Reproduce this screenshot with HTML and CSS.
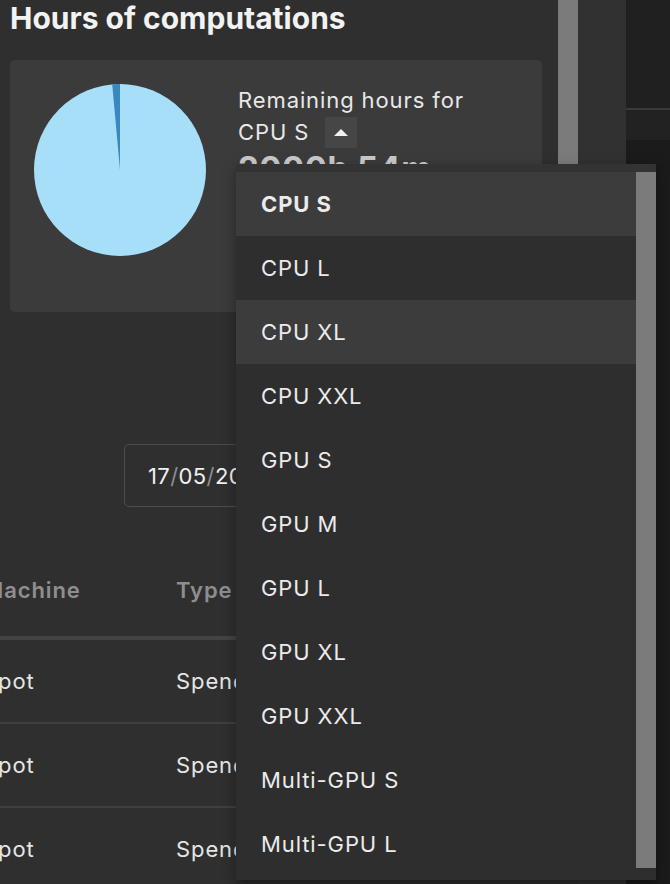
FILE: index.html
```html
<!DOCTYPE html>
<html lang="en">
<head>
<meta charset="utf-8">
<title>Hours of computations</title>
<link rel="stylesheet" href="styles.css">
</head>
<body>
<div class="app">
  <main class="main">
    <h1 class="title">Hours of computations</h1>
    <section class="card">
      <svg class="pie" width="172" height="172" viewBox="0 0 172 172" aria-hidden="true">
        <circle cx="86" cy="86" r="86" fill="#a8dff8"/>
        <path d="M86 86 L86 0 A86 86 0 0 0 78.2 0.35 Z" fill="#3a88c0"/>
      </svg>
      <div class="info">
        <div class="info-line">Remaining hours for</div>
        <div class="info-select">
          <span>CPU S</span>
          <span class="arrow-btn"><span class="tri"></span></span>
        </div>
        <div class="big">2000h 54m</div>
      </div>
    </section>
    <div class="date-wrap">
      <div class="date-input">17<span class="sep">/</span>05<span class="sep">/</span>2023</div>
    </div>
    <div class="table">
      <div class="tr head">
        <div class="c1">Machine</div>
        <div class="c2">Type</div>
      </div>
      <div class="tr">
        <div class="c1">Spot</div>
        <div class="c2">Spend</div>
      </div>
      <div class="tr">
        <div class="c1">Spot</div>
        <div class="c2">Spend</div>
      </div>
      <div class="tr">
        <div class="c1">Spot</div>
        <div class="c2">Spend</div>
      </div>
    </div>
  </main>
  <div class="vscroll"><div class="thumb"></div></div>
  <div class="side"></div>
  <div class="far">
    <div class="far-top"></div>
    <div class="far-mid"></div>
  </div>

  <div class="menu">
    <ul class="menu-list">
      <li class="item selected">CPU S</li>
      <li class="item">CPU L</li>
      <li class="item hover">CPU XL</li>
      <li class="item">CPU XXL</li>
      <li class="item">GPU S</li>
      <li class="item">GPU M</li>
      <li class="item">GPU L</li>
      <li class="item">GPU XL</li>
      <li class="item">GPU XXL</li>
      <li class="item">Multi-GPU S</li>
      <li class="item">Multi-GPU L</li>
    </ul>
    <div class="menu-scroll"></div>
  </div>
</div>
</body>
</html>
```

FILE: styles.css
```css
* { box-sizing: border-box; }
html, body {
  margin: 0;
  padding: 0;
  background: #1b1b1b;
  font-family: Inter, "Noto Sans", "Liberation Sans", sans-serif;
  color: #ececec;
}
.app {
  position: relative;
  display: flex;
  width: 670px;
  height: 884px;
  overflow: hidden;
}
.main {
  width: 558px;
  flex: none;
  background: #2f2f2f;
  overflow: hidden;
}
.title {
  margin: 0;
  padding-left: 10px;
  font-size: 30px;
  line-height: 36px;
  font-weight: 700;
  color: #f2f2f2;
  white-space: nowrap;
}
.card {
  margin: 24px 16px 0 10px;
  height: 252px;
  background: #3b3b3b;
  border-radius: 5px;
  display: flex;
  padding: 24px 0 0 24px;
  gap: 32px;
}
.pie { flex: none; display: block; }
.info {
  padding-top: 1px;
  font-size: 22px;
  letter-spacing: 0.9px;
  color: #e8e8e8;
}
.info-line { line-height: 30px; }
.info-select {
  display: flex;
  align-items: center;
  gap: 16px;
  height: 32px;
  margin-top: 1px;
}
.arrow-btn {
  width: 32px;
  height: 31px;
  background: #464646;
  display: flex;
  align-items: center;
  justify-content: center;
}
.tri {
  width: 0;
  height: 0;
  border-left: 7.5px solid transparent;
  border-right: 7.5px solid transparent;
  border-bottom: 7px solid #f0f0f0;
}
.big {
  font-size: 33px;
  font-weight: 700;
  letter-spacing: 0.5px;
  color: #c9c9c9;
  line-height: 40px;
  white-space: nowrap;
}
.date-wrap {
  margin-top: 132px;
  padding-left: 124px;
}
.date-input {
  width: 300px;
  height: 63px;
  border: 1px solid #4c4c4c;
  border-radius: 5px;
  padding-left: 23px;
  display: flex;
  align-items: center;
  font-size: 22px;
  letter-spacing: 0.4px;
  color: #f0f0f0;
}
.sep { color: #8d8d8d; }
.table {
  margin-top: 43px;
  margin-left: -17px;
}
.tr {
  display: flex;
  align-items: center;
  height: 84px;
  border-bottom: 2px solid #3f3f3f;
  font-size: 22px;
  letter-spacing: 0.9px;
  color: #e6e6e6;
  white-space: nowrap;
}
.tr.head {
  height: 90px;
  padding-bottom: 6px;
  border-bottom: 4px solid #434343;
  color: #8e8e8e;
  font-weight: 600;
}
.c1 { width: 193px; flex: none; }
.c2 { flex: 1; }
.vscroll {
  width: 20px;
  flex: none;
  background: #2f2f2f;
}
.thumb {
  height: 240px;
  background: #7b7b7b;
}
.side {
  width: 48px;
  flex: none;
  background: #313131;
}
.far {
  flex: 1;
  background: #1b1b1b;
}
.far-top {
  height: 110px;
  background: #202020;
  border-bottom: 2px solid #3a3a3a;
}
.far-mid {
  height: 30px;
  background: #222222;
}
.menu {
  position: absolute;
  left: 236px;
  top: 164px;
  width: 420px;
  height: 716px;
  background: #2e2e2e;
  border-top: 8px solid #333333;
  display: flex;
  align-items: flex-start;
  overflow: hidden;
  box-shadow: 0 5px 5px -3px rgba(0,0,0,0.2), 0 8px 10px 1px rgba(0,0,0,0.14), 0 3px 14px 2px rgba(0,0,0,0.12);
}
.menu-list {
  list-style: none;
  margin: 0;
  padding: 0;
  flex: 1;
}
.item {
  height: 64px;
  padding-left: 25px;
  display: flex;
  align-items: center;
  font-size: 22px;
  letter-spacing: 0.9px;
  color: #ebebeb;
  white-space: nowrap;
}
.item.selected {
  background: #3c3c3c;
  font-weight: 700;
}
.item.hover { background: #3c3c3c; }
.menu-scroll {
  width: 20px;
  height: 696px;
  flex: none;
  background: #7b7b7b;
}
```
